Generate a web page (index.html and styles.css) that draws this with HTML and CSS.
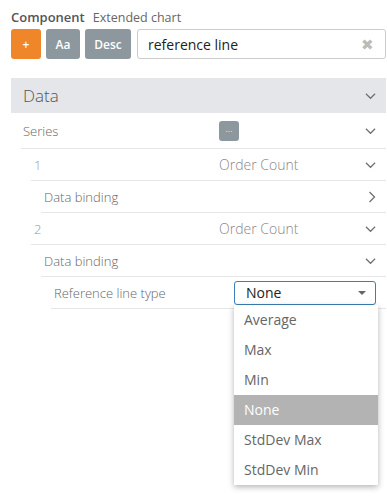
FILE: index.html
```html
<!DOCTYPE html>
<html lang="en">
  <head>
    <meta charset="UTF-8" />
    <title>Extended chart</title>
    <link rel="stylesheet" href="styles.css">
  </head>
  <body>
    <div class="editor">
      <div class="caption"><b>Component</b><span class="caption-name">Extended chart</span></div>
      <div class="toolbar">
        <button class="btn btn-add">+</button>
        <button class="btn btn-case">Aa</button>
        <button class="btn btn-sort">Desc</button>
        <div class="search">
          <span class="search-text">reference line</span>
          <span class="search-clear">&#10006;</span>
        </div>
      </div>

      <div class="section">
        <div class="section-head">
          <span>Data</span>
          <svg class="chev" viewBox="0 0 12 8"><path d="M1 1.5 6 6.5 11 1.5" /></svg>
        </div>

        <div class="row row-series lvl0">
          <span class="label">Series</span>
          <span class="dots">...</span>
          <svg class="chev" viewBox="0 0 12 8"><path d="M1 1.5 6 6.5 11 1.5" /></svg>
        </div>
        <div class="row lvl1">
          <span class="label">1</span>
          <span class="value">Order Count</span>
          <svg class="chev" viewBox="0 0 12 8"><path d="M1 1.5 6 6.5 11 1.5" /></svg>
        </div>
        <div class="row lvl2">
          <span class="label">Data binding</span>
          <svg class="chev chev-right" viewBox="0 0 8 12"><path d="M1.5 1 6.5 6 1.5 11" /></svg>
        </div>
        <div class="row lvl1">
          <span class="label">2</span>
          <span class="value">Order Count</span>
          <svg class="chev" viewBox="0 0 12 8"><path d="M1 1.5 6 6.5 11 1.5" /></svg>
        </div>
        <div class="row lvl2">
          <span class="label">Data binding</span>
          <svg class="chev" viewBox="0 0 12 8"><path d="M1 1.5 6 6.5 11 1.5" /></svg>
        </div>
        <div class="row row-field lvl3">
          <span class="label">Reference line type</span>
          <div class="select-wrap">
            <div class="select">
              <span>None</span>
              <span class="caret"></span>
            </div>
            <div class="options">
              <div class="option">Average</div>
              <div class="option">Max</div>
              <div class="option">Min</div>
              <div class="option option-active">None</div>
              <div class="option">StdDev Max</div>
              <div class="option">StdDev Min</div>
            </div>
          </div>
        </div>
      </div>
    </div>
  </body>
</html>
```

FILE: styles.css
```css
html,
body {
  min-height: 100%;
}

body {
  margin: 0;
  min-height: 502px;
  background: #fff;
  font-family: "Open Sans", "Noto Sans", sans-serif;
  color: #555;
}

.editor {
  min-height: 493px;
  padding: 9px 1px 0 11px;
}

.caption {
  font-size: 13px;
  line-height: 17px;
  color: #666;
}

.caption b {
  font-weight: 600;
  color: #555;
}

.caption-name {
  margin-left: 8px;
  font-size: 12.5px;
}

.toolbar {
  display: flex;
  align-items: center;
  gap: 5px;
  margin-top: 3px;
}

.btn {
  height: 30px;
  padding: 0;
  border: none;
  border-radius: 3px;
  background-color: #8d979e;
  color: #fff;
  font-family: inherit;
  font-size: 12px;
  font-weight: 600;
}

.btn-add {
  width: 30px;
  background-color: #f0862a;
}

.btn-case {
  width: 34px;
}

.btn-sort {
  width: 46px;
}

.search {
  flex: 1;
  height: 28px;
  margin-left: 1px;
  border: 1px solid #ccc;
  border-radius: 3px;
  display: flex;
  align-items: center;
  justify-content: space-between;
  padding: 0 11px 0 10px;
}

.search-text {
  font-size: 14px;
  color: #222;
}

.search-clear {
  color: #bbb;
  font-size: 15px;
}

.section {
  margin-top: 19px;
}

.section-head {
  height: 35px;
  background-color: #e4e6e9;
  display: flex;
  align-items: center;
  justify-content: space-between;
  padding: 0 10px 0 12px;
  font-size: 17px;
  color: #555;
  font-weight: 300;
}

.chev {
  width: 11px;
  height: 8px;
  fill: none;
  stroke: #707070;
  stroke-width: 1.3;
}

.chev-right {
  width: 8px;
  height: 12px;
}

.row {
  display: flex;
  align-items: center;
  height: 31px;
  border-bottom: 1px solid #e6e6e6;
  padding-right: 10px;
  font-size: 13px;
  font-weight: 300;
  color: #666;
}

.row .chev {
  margin-left: auto;
}

.lvl0 { margin-left: 10px; padding-left: 2px; }
.lvl1 { margin-left: 20px; padding-left: 3px; }
.lvl2 { margin-left: 30px; padding-left: 3px; }
.lvl3 { margin-left: 40px; padding-left: 3px; }

.row-series {
  height: 35px;
}

.label {
  width: 196px;
  flex: none;
}

.lvl1 .label { width: 185px; color: #999; }
.lvl3 .label { width: 180px; }

.value {
  font-size: 14px;
  color: #888;
}

.dots {
  width: 20px;
  height: 20px;
  border-radius: 3px;
  background-color: #8d979e;
  color: #fff;
  font-size: 10px;
  line-height: 14px;
  text-align: center;
}

.select-wrap {
  position: relative;
  width: 143px;
  height: 24px;
}

.select {
  height: 22px;
  border: 1px solid #3a7fb8;
  border-radius: 3px;
  display: flex;
  align-items: center;
  justify-content: space-between;
  padding: 0 9px 0 11px;
  font-size: 14px;
  font-weight: 400;
  color: #222;
}

.caret {
  width: 0;
  height: 0;
  border-left: 4px solid transparent;
  border-right: 4px solid transparent;
  border-top: 4px solid #666;
}

.options {
  position: absolute;
  top: 24px;
  left: 0;
  width: 144px;
  height: 180px;
  background: #fff;
  box-shadow: 0 2px 6px rgba(0, 0, 0, 0.3);
  z-index: 2;
}

.option {
  height: 30px;
  line-height: 30px;
  padding-left: 10px;
  font-size: 14px;
  font-weight: 400;
  color: #666;
}

.option-active {
  background-color: #b3b3b3;
  color: #fff;
}
```
